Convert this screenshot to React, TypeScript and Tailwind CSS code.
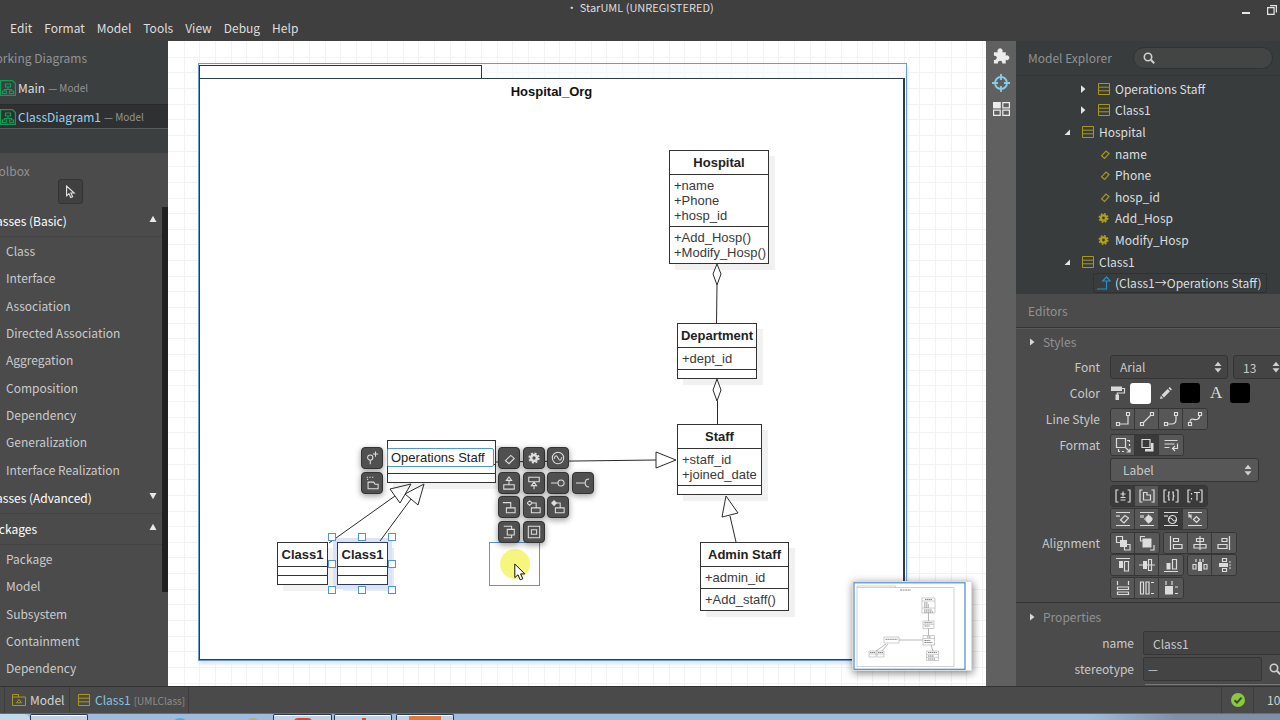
import React, { useState } from 'react';

const UI_FONT = "font-['Noto_Sans_CJK_SC','Noto_Sans',sans-serif]";
const DIAGRAM_FONT = "font-['Liberation_Sans',Arial,sans-serif]";

const MENUS = ['Edit', 'Format', 'Model', 'Tools', 'View', 'Debug', 'Help'];

const BASIC_TOOLS = [
  'Class', 'Interface', 'Association', 'Directed Association', 'Aggregation',
  'Composition', 'Dependency', 'Generalization', 'Interface Realization',
];
const PACKAGE_TOOLS = ['Package', 'Model', 'Subsystem', 'Containment', 'Dependency'];

type TreeKind = 'class' | 'attribute' | 'operation' | 'generalization';

interface TreeNode {
  name: string;
  kind: TreeKind;
  level: 0 | 1;
  state?: 'open' | 'closed';
  selected?: boolean;
}

const TREE: TreeNode[] = [
  { name: 'Operations Staff', kind: 'class', level: 1, state: 'closed' },
  { name: 'Class1', kind: 'class', level: 1, state: 'closed' },
  { name: 'Hospital', kind: 'class', level: 0, state: 'open' },
  { name: 'name', kind: 'attribute', level: 1 },
  { name: 'Phone', kind: 'attribute', level: 1 },
  { name: 'hosp_id', kind: 'attribute', level: 1 },
  { name: 'Add_Hosp', kind: 'operation', level: 1 },
  { name: 'Modify_Hosp', kind: 'operation', level: 1 },
  { name: 'Class1', kind: 'class', level: 0, state: 'open' },
  { name: '(Class1→Operations Staff)', kind: 'generalization', level: 1, selected: true },
];

/* ---------- icons ---------- */

const ClassIcon = () => (
  <svg viewBox="0 0 12 12" className="size-3 shrink-0" fill="none" stroke="#a8981c">
    <path d="M.5 .5h11v11H.5zM.5 4.2h11M.5 7.8h11" />
  </svg>
);

const DiagramIcon = () => (
  <svg viewBox="0 0 16 16" className="size-4 shrink-0" fill="none" stroke="#139a55" strokeWidth="1.2">
    <path d="M.6 .6h11.8l3 3v11.8H.6zM5.5 4h5v3h-5zM8 7v3M4.5 11V9.5h7V11M2.5 11h4v2.5h-4zM9.5 11h4v2.5h-4z" />
  </svg>
);

const TreeIcon = ({ kind }: { kind: TreeKind }) => {
  switch (kind) {
    case 'class':
      return <ClassIcon />;
    case 'attribute':
      return (
        <svg viewBox="0 0 12 12" className="size-3 shrink-0" fill="none" stroke="#a8981c" strokeWidth="1.2">
          <path d="M3.5 7.8 8 3l3 2.6-4.4 4.9z" />
        </svg>
      );
    case 'operation':
      return (
        <svg viewBox="0 0 12 12" className="size-3 shrink-0" fill="none" stroke="#b3a013">
          <circle cx="5.5" cy="6" r="2.6" strokeWidth="2.4" />
          <circle cx="5.5" cy="6" r="4.3" strokeWidth="1.4" strokeDasharray="1.8 1.58" />
        </svg>
      );
    case 'generalization':
      return (
        <svg viewBox="0 0 14 14" className="-mx-px size-[14px] shrink-0" fill="none" stroke="#2b8fc4" strokeWidth="1.2">
          <path d="M0 13h9.5V5M5.8 5h7.4L9.5 1z" />
        </svg>
      );
  }
};

const Caret = ({ state }: { state?: 'open' | 'closed' }) => (
  <svg viewBox="0 0 10 10" className="mr-[10px] size-[10px] shrink-0 fill-[#e4e4e4]">
    {state === 'closed' && <path d="M3 1.2 7.4 5 3 9z" />}
    {state === 'open' && <path d="M8 2.5V8H2.5z" />}
  </svg>
);

const SearchIcon = () => (
  <svg viewBox="0 0 12 12" className="size-3 shrink-0" fill="none" stroke="#cfcfcf" strokeWidth="1.6">
    <circle cx="5" cy="5" r="3.7" />
    <path d="m7.8 7.8 3.4 3.4" strokeWidth="2" />
  </svg>
);

const Glyph = ({ d, fill, className = 'size-4' }: { d: string; fill?: string; className?: string }) => (
  <svg viewBox="0 0 16 16" className={className} fill="none" stroke="currentColor" strokeWidth="1.2">
    {fill && <path d={fill} fill="currentColor" stroke="none" />}
    <path d={d} />
  </svg>
);

const GearGlyph = () => (
  <svg viewBox="0 0 16 16" className="size-4" fill="none" stroke="currentColor">
    <circle cx="8" cy="8" r="3" strokeWidth="2.6" />
    <circle cx="8" cy="8" r="4.8" strokeWidth="1.6" strokeDasharray="2 1.77" />
  </svg>
);

/* ---------- left side ---------- */

const DiagramRow = ({ name, active }: { name: string; active?: boolean }) => (
  <button className={`flex h-[25px] w-full items-center border-y ${active ? 'border-t-[#2a2a2a] border-b-[#585a5b] bg-[#2f3031]' : 'border-transparent'}`}>
    <DiagramIcon />
    <span className={`ml-[2px] text-[12px] ${active ? 'text-[#98d2f2]' : 'text-[#dedede]'}`}>{name}</span>
    <span className="ml-[3px] text-[10px] text-[#939495]">— Model</span>
  </button>
);

const ToolGroup = ({ title, open, tools }: { title: string; open: boolean; tools?: string[] }) => (
  <section>
    <button className="flex h-[31px] w-full items-center justify-between border-b border-[#434343] pr-[5px] text-[12px] text-white">
      <span className="-ml-[15px]">{title}</span>
      <svg viewBox="0 0 8 8" className="mb-1 size-2 fill-[#e8e8e8]">
        {open ? <path d="M.5 7 4 .8 7.5 7z" /> : <path d="M.5 1 4 7.2 7.5 1z" />}
      </svg>
    </button>
    {tools && (
      <ul>
        {tools.map((tool, i) => (
          <li key={tool} className={i % 3 === 1 ? 'h-7' : 'h-[27px]'}>
            <button className="flex size-full items-center pl-[6px] text-[12px] text-[#cacaca]">{tool}</button>
          </li>
        ))}
      </ul>
    )}
  </section>
);

const Sidebar = () => (
  <aside className="flex w-[168px] shrink-0 flex-col overflow-hidden bg-[#4b4b4b]">
    <section className="h-28 shrink-0 bg-[#3c3f40]">
      <h2 className="-ml-[15px] flex h-[34px] items-center text-[12px] text-[#929394]">Working Diagrams</h2>
      <DiagramRow name="Main" />
      <div className="h-1" />
      <DiagramRow name="ClassDiagram1" active />
    </section>
    <section className="relative min-h-0 flex-1">
      <h2 className="-ml-[15px] flex h-[26px] items-end text-[12px] leading-[17px] text-[#929292]">Toolbox</h2>
      <button aria-label="Select" className="ml-[58px] flex size-[25px] items-center justify-center rounded-[3px] border border-[#333] bg-[#404040]">
        <svg viewBox="0 0 12 16" className="h-[14px] w-[11px]" fill="none" stroke="#e0e0e0" strokeWidth="1.3">
          <path d="M1.5 1.2v11l2.8-2.4 1.9 4.6 2.2-.9-1.9-4.4h3.7z" />
        </svg>
      </button>
      <div className="mt-[2px] mr-[6px]">
        <ToolGroup title="Classes (Basic)" open tools={BASIC_TOOLS} />
        <ToolGroup title="Classes (Advanced)" open={false} />
        <ToolGroup title="Packages" open tools={PACKAGE_TOOLS} />
      </div>
      <div className="absolute top-[54px] right-0 h-[385px] w-[6px] bg-[#202020]" />
    </section>
  </aside>
);

/* ---------- canvas ---------- */

interface ClassBoxProps {
  name: string;
  place: string;
  attributes?: string[];
  operations?: string[];
  glow?: boolean;
}

const Compartment = ({ lines }: { lines: string[] }) => (
  <ul className={`border-t border-[#333] pl-[4px] ${lines.length ? 'py-[3px]' : 'h-[9px]'}`}>
    {lines.map(line => <li key={line} className="h-[15px] leading-[15px] text-[#3a3a3a]">{line}</li>)}
  </ul>
);

const ClassBox = ({ name, place, attributes = [], operations = [], glow }: ClassBoxProps) => (
  <div className={`absolute border bg-white whitespace-nowrap ${place} ${glow ? 'border-[#2b3a5c] shadow-[0_0_0_4px_#dbe4f6,6px_6px_0_#e3eaf8]' : 'border-[#333] shadow-[6px_6px_0_#f1f1f1]'}`}>
    <div className="h-[23px] text-center leading-[23px] font-bold text-[#222]">{name}</div>
    <Compartment lines={attributes} />
    <Compartment lines={operations} />
  </div>
);

const GRID_STEP = 15.65;
const gridLines = () => {
  let d = '';
  for (let i = 1; i < 130; i++) d += `M${Math.round(i * GRID_STEP)} 0V1400`;
  for (let i = 1; i < 90; i++) d += `M0 ${Math.round(i * GRID_STEP)}H2000`;
  return d;
};

const HANDLES = [
  'left-[160px] top-[492px]', 'left-[190px] top-[492px]', 'left-[220px] top-[492px]',
  'left-[160px] top-[519px]', 'left-[220px] top-[519px]',
  'left-[160px] top-[545px]', 'left-[190px] top-[545px]', 'left-[220px] top-[545px]',
];

const QuickButton = ({ label, place, children }: { label: string; place?: string; children: React.ReactNode }) => (
  <button aria-label={label} className={`flex size-[22px] items-center justify-center rounded-[4px] border border-[#333] bg-[#505050] text-[#dedede] shadow-[0_2px_6px_rgba(0,0,0,0.4)] ${place ?? ''}`}>
    {children}
  </button>
);

const Minimap = () => (
  <div className="absolute right-[14px] bottom-[15px] h-[90px] w-[120px] border border-[#ddd] bg-white shadow-[1px_2px_8px_rgba(0,0,0,0.5)]">
    <svg viewBox="0 0 118 88" className="size-full" fill="none" stroke="#b8b8b8" strokeWidth=".7">
      <rect x="1" y=".8" width="111" height="86.5" stroke="#4a8cc9" strokeWidth="1.2" />
      <path d="M4 5.5V4h38.5v1.5M4 5.5h97v79H4z" stroke="#bdbdbd" />
      <path d="M47 8h11" stroke="#555" strokeDasharray="2 .6" />
      <path d="M69 16h13v15H69zM69 19h13M69 26h13M70 39h11v7.5H70zM70 42.3h11M70 53.5h11.5V63H70zM70 56.5h11.5M73.5 69h12v9.5h-12zM73.5 72.3h12M73.5 75.3h12M31 55h15v6H31zM16 69h7v6h-7zM24 69h7v6h-7zM16 72h15" />
      <path d="M75.5 31v8M75.5 46.5v7M46 58h24M80 69l-2-6M23 69l10-7M29 69l6-7" stroke="#999" />
      <path d="M72 17.5h7M71 21h4M71 23h5M71 25h5M71 28h8M71 30h9M71.5 40.7h8M71.5 44h5M74 55h4M71.5 58.5h6M71.5 60.5h8M75 70.5h9M75 74h6M75 77h7M32.5 57.3h12M17 70.5h5M25 70.5h5" stroke="#555" strokeDasharray="1.5 .4" />
    </svg>
  </div>
);

const Canvas = () => {
  const [name, setName] = useState('Operations Staff');

  return (
    <main className={`relative min-w-0 flex-1 overflow-hidden bg-white text-[13px] ${DIAGRAM_FONT}`}>
      <svg className="absolute size-full" stroke="#f2f2f2" shapeRendering="crispEdges">
        <path d={gridLines()} />
      </svg>

      {/* package */}
      <div className="absolute top-[22px] left-[30px] h-[598px] w-[709px] border border-[#6c9bd2] bg-[#f8fafe]/60 shadow-[1px_3px_3px_#dbe6f6]" />
      <div className="absolute top-[24px] left-[31px] h-[14px] w-[283px] border border-[#26324a] bg-white" />
      <div className="absolute top-[37px] left-[31px] h-[582px] w-[706px] border border-r-2 border-[#2c3a56] bg-white pt-[4px] text-center leading-[18px] font-bold text-[#111]">
        Hospital_Org
      </div>

      <ClassBox name="Hospital" place="left-[501px] top-[109px] w-[100px]" attributes={['+name', '+Phone', '+hosp_id']} operations={['+Add_Hosp()', '+Modify_Hosp()']} />
      <ClassBox name="Department" place="left-[509px] top-[282px] w-[80px]" attributes={['+dept_id']} />
      <ClassBox name="Staff" place="left-[509px] top-[383px] w-[85px]" attributes={['+staff_id', '+joined_date']} />
      <ClassBox name="Admin Staff" place="left-[532px] top-[501px] w-[89px]" attributes={['+admin_id']} operations={['+Add_staff()']} />
      <ClassBox name="Class1" place="left-[109px] top-[501px] w-[51px]" />
      <ClassBox name="" place="left-[219px] top-[399px] w-[109px]" />
      <ClassBox name="Class1" place="left-[169px] top-[501px] w-[51px]" glow />

      {/* relationships */}
      <svg className="absolute size-full" fill="none" stroke="#2a2a2a">
        <path d="M548.5 282l.5-38M549.5 383v-23M327 421l161-2M568 501l-6-26M161 502l66-47M212 500l31-42" />
        <path d="m549 223 4 10-4 11-4-11zM549 338l4 11-4 11-4-11zM508 419l-20-8v16zM558 455l-4 21 16-4z" fill="white" />
        <path d="m243 443-21 5 10 14zM256 443l-19 10 13 11z" />
      </svg>

      {HANDLES.map(place => <div key={place} className={`absolute size-2 border border-[#4d94d0] bg-white ${place}`} />)}

      <div className="absolute top-[501px] left-[321px] flex h-[44px] w-[51px] items-center justify-center border border-[#5b96cf] bg-white">
        <div className="size-[30px] rounded-full bg-[#f6f67e]" />
      </div>

      <input
        aria-label="Element name"
        value={name}
        onChange={e => setName(e.target.value)}
        className="absolute top-[407px] left-[219px] h-[19px] w-[107px] rounded-[2px] border border-[#4f97d8] bg-white px-[3px] text-[#222] outline-none"
      />

      {/* quick edit buttons */}
      <div className="absolute top-[406px] left-[193px] flex flex-col gap-[3px]">
        <QuickButton label="Add note"><Glyph d="M6 15v-5M9 7.5a3 3 0 1 1-6 0 3 3 0 0 1 6 0zM9 3.5h6M12 .5v6" className="size-[14px]" /></QuickButton>
        <QuickButton label="Add constraint"><Glyph d="M2 1.5h1.5M5 1.5h1.5M8 1.5h1.5M3 3v1.5M3.5 14.5V7H10l1.5 2.5H15v5z" className="size-[14px]" /></QuickButton>
      </div>
      <div className="absolute top-[406px] left-[330px] grid h-[96px] w-[96px] grid-cols-[22px_22px_22px_22px] content-between justify-between">
        <QuickButton label="Add attribute"><Glyph d="m4 11 6-6 4 3.5-6 6z" className="size-[14px]" /></QuickButton>
        <QuickButton label="Add operation"><GearGlyph /></QuickButton>
        <QuickButton label="Add reception"><Glyph d="M14.5 8a6.5 6.5 0 1 1-13 0 6.5 6.5 0 0 1 13 0zM3.5 9C5 4 6.5 5 8 8s3 4 4.5-1" className="size-[14px]" /></QuickButton>
        <QuickButton label="Add sub-class" place="col-start-1"><Glyph d="M2 10h12v5H2zM8 10V5M5 5l3-4 3 4z" className="size-[14px]" /></QuickButton>
        <QuickButton label="Add super-class"><Glyph d="M2 1.5h12v5H2zM8 15v-4M5 11l3-4 3 4z" className="size-[14px]" /></QuickButton>
        <QuickButton label="Add provided interface"><Glyph d="M0 8h8M15 8a3.5 3.5 0 1 1-7 0 3.5 3.5 0 0 1 7 0z" className="size-[14px]" /></QuickButton>
        <QuickButton label="Add required interface"><Glyph d="M0 8h10M15 3.5c-6 0-6 9 0 9" className="size-[14px]" /></QuickButton>
        <QuickButton label="Add associated class"><Glyph d="M1 3h9v6M5 9h10v5.5H5z" className="size-[14px]" /></QuickButton>
        <QuickButton label="Add aggregated class"><Glyph d="M0 3.5 3 1l3 2.5L3 6zM6 3.5h4.5V9M5 9h10v5.5H5z" className="size-[14px]" /></QuickButton>
        <QuickButton label="Add composed class"><Glyph d="M6 3.5h4.5V9M5 9h10v5.5H5z" fill="M0 3.5 3.5 0 7 3.5 3.5 7z" className="size-[14px]" /></QuickButton>
        <QuickButton label="Add port" place="col-start-1"><Glyph d="M2 1.5h9V5M6 5h8v6.5H6zM11 11.5v3H2" className="size-[14px]" /></QuickButton>
        <QuickButton label="Add part"><Glyph d="M1.5 1.5h13v13h-13zM5 5.5h6v5H5z" className="size-[14px]" /></QuickButton>
      </div>

      {/* mouse pointer */}
      <svg viewBox="0 0 12 18" className="absolute top-[522px] left-[346px] h-[18px] w-3" fill="white" stroke="#111">
        <path d="M.8 1v13.6l3.2-2.8 2.2 5 2.6-1.1-2.2-4.8h4.2z" />
      </svg>

      <Minimap />
    </main>
  );
};

/* ---------- right side ---------- */

const ModuleBar = () => (
  <nav className="flex w-[30px] shrink-0 flex-col items-center gap-[10px] bg-[#606060] pt-[6px] text-[#ececec]">
    <button aria-label="Extensions">
      <svg viewBox="0 0 18 18" className="size-[17px]" fill="currentColor">
        <path d="M1 5.5h4.2a2.7 2.7 0 1 1 4.6 0h3.7v3.7a2.5 2.5 0 1 1 0 4.3v4H9.7a2.3 2.3 0 1 0-4.4 0H1v-3.8a2.3 2.3 0 1 0 0-4.4z" />
      </svg>
    </button>
    <button aria-label="Navigator" className="text-[#86cdea]">
      <svg viewBox="0 0 18 18" className="size-[18px]" fill="none" stroke="currentColor" strokeWidth="1.8">
        <circle cx="9" cy="9" r="6" />
        <path d="M9 0v6M9 12v6M0 9h6M12 9h6" />
      </svg>
    </button>
    <button aria-label="Layout">
      <svg viewBox="0 0 17 14" className="h-[14px] w-[17px]" fill="none" stroke="currentColor" strokeWidth="1.2">
        <path d="M0 0h7.8v6.4H0z" fill="currentColor" stroke="none" />
        <path d="M9.8 .6h6.6v5.3H9.8zM.6 8.1h6.6v5.3H.6zM9.8 8.1h6.6v5.3H9.8z" />
      </svg>
    </button>
  </nav>
);

const Spinner = ({ className = 'right-[6px]' }: { className?: string }) => (
  <svg viewBox="0 0 8 12" className={`pointer-events-none absolute top-1/2 h-3 w-2 -translate-y-1/2 fill-[#cfcfcf] ${className}`}>
    <path d="M.5 5 4 .8 7.5 5zM.5 7.2 4 11.4 7.5 7.2z" />
  </svg>
);

const ButtonGroup = ({ items }: { items: { label: string; d: string; fill?: string; on?: boolean }[] }) => (
  <div className="flex h-[22px] shrink-0 divide-x divide-[#383838] overflow-hidden rounded-[3px] border border-[#363636] text-[#dcdcdc]">
    {items.map(item => (
      <button key={item.label} aria-label={item.label} className={`flex w-6 items-center justify-center ${item.on ? 'bg-[#3a3a3a]' : 'bg-[#575757]'}`}>
        <Glyph d={item.d} fill={item.fill} />
      </button>
    ))}
  </div>
);

const FieldRow = ({ label, children, className = 'h-[26px]' }: { label: string; children: React.ReactNode; className?: string }) => (
  <div className={`flex items-center text-[#d8d8d8] ${className}`}>
    <span className="mr-[10px] w-[84px] shrink-0 text-right text-[#c9c9c9]">{label}</span>
    {children}
  </div>
);

const ENDS = 'M1.5 11.5h3v3h-3zM11.5 1.5h3v3h-3z';
const LINE_STYLES = [
  { label: 'Rectilinear', d: `${ENDS}M4.5 13H13V4.5` },
  { label: 'Oblique', d: `${ENDS}M4.5 11.5l7-7` },
  { label: 'Rounded rectilinear', d: `${ENDS}M4.5 13h4q4.5 0 4.5-4.5v-4` },
  { label: 'Curve', d: `${ENDS}M3 11.5C3 3.5 11 13.5 13 4.5` },
];
const FORMATS = [
  { label: 'Auto resize', d: 'M1.5 1.5h9v9h-9zM12 3.5h2.5V5M14.5 7v2M3.5 12v2.5H5M7 14.5h2M10 10l5 5M15 11.5V15h-3.5' },
  { label: 'Show shadow', d: 'M3 2.5h8v8H3z', fill: 'M12 6h2.5v8.5H6V12h6z', on: true },
  { label: 'Word wrap', d: 'M1.5 3.5h13M1.5 7h10M1.5 10.5h5M14.5 6.5v5H10M12 9l-2.5 2.5L12 14' },
];
const BRACKETS = 'M3.5 2H1v12h2.5M12.5 2H15v12h-2.5';
const SHOW_OPTIONS = [
  { label: 'Show visibility', d: `${BRACKETS}M8 3.5v5M5.5 6h5M5.5 9.5h5M5.5 12h5`, on: true },
  { label: 'Show namespace', d: `${BRACKETS}M4.5 12V4.5H8V7h3.5v5z` },
  { label: 'Show property', d: `${BRACKETS}M7 4H5.8v3L5 8l.8 1v3H7M9 4h1.2v3l.8 1-.8 1v3H9`, on: true },
  { label: 'Show type', d: `${BRACKETS}M7 4.5h6M10 4.5v8M4.5 5v1.5M4.5 10v1.5`, on: true },
];
const RULES = 'M1 1.5h14M1 14.5h14';
const SUPPRESS = [
  { label: 'Suppress attributes', d: `${RULES}M5.5 9 10 4.5 13.5 7 9 12zM2 4v2M4 4v2` },
  { label: 'Suppress operations', d: `${RULES}M2 4v3M4 4v3M9.5 3.5v9M5 8h9`, fill: 'M6.500 6.500l2-2H11l2 2v3l-2 2.200H8.500l-2-2.200z' },
  { label: 'Suppress receptions', d: `${RULES}M2 4v2M4 4v2M5.500 8.500a4 4 0 1 0 8 0 4 4 0 0 0-8 0q2-3 4 0t4 0`, on: true },
  { label: 'Suppress literals', d: `${RULES}M6.500 8.500l3-3 3 3-3 3zM2 6.500v-3l2 3v-3` },
];
const ALIGN = [
  [
    { label: 'Bring to front', d: 'M1.5 1.5h6v6h-6zM9.5 9.5H15V15H9.5z', fill: 'M5 5h7v7H5z' },
    { label: 'Send to back', d: 'M5 6H1.5V1.5H6M11 15h4v-5', fill: 'M3.5 3.5h9v9h-9z' },
  ],
  [
    { label: 'Align left', d: 'M2.5 1v14M5.5 3.5h5v3h-5zM5.5 9.5H14v4H5.5z' },
    { label: 'Align center', d: 'M8 1v14M4.5 3.5h7v3h-7zM2 9.5h12V13H2z' },
    { label: 'Align right', d: 'M13.5 1v14M6 3.5h5v3H6zM2 9.5h9v4H2z' },
  ],
  [
    { label: 'Align top', d: 'M1 1.5h14M9.5 4.5h4V14h-4z', fill: 'M4 4h4v7H4z' },
    { label: 'Align middle', d: 'M0 8h16M9.5 2.5h3v11h-3z', fill: 'M4 4h4v8H4z' },
    { label: 'Align bottom', d: 'M1 14.5h14M9.5 2.5h4V12h-4z', fill: 'M3.5 6h4v6.5h-4z' },
  ],
  [
    { label: 'Space horizontally', d: 'M1 7.5h3V12H1zM12 7.5h3V12h-3zM4 2v3M8 2v3M11 2v3', fill: 'M6 5h4v9H6z' },
    { label: 'Space vertically', d: 'M6.5 1.5h4v3h-4zM6.5 11.5h4v3h-4zM13 5h2M13 8h2M13 11h2', fill: 'M3 6h9v4H3z' },
  ],
  [
    { label: 'Set width', d: 'M2.5 1v4M13.5 1v4M2.5 7h11v2.5h-11zM2.5 12h11v2.5h-11z' },
    { label: 'Set height', d: 'M1.5 2h3v12h-3zM7 2h3v12H7zM12 2.5h3M12 13.5h3' },
    { label: 'Set size', d: 'M3 1v4M9 1v4M12 7h3M12 13.5h3', fill: 'M2 6h8v8.5H2z' },
  ],
];

const SELECT = 'h-6 w-full appearance-none rounded-[3px] border border-[#343434] pl-[9px] text-[#c9c9c9] outline-none';

const SectionTitle = ({ children, className = '' }: { children: string; className?: string }) => (
  <button className={`flex w-full items-center pl-[13px] text-[12px] text-[#929292] ${className}`}>
    <svg viewBox="0 0 6 8" className="mr-[8px] h-2 w-[6px] fill-[#d8d8d8]"><path d="M1 .5 5.5 4 1 7.5z" /></svg>
    {children}
  </button>
);

const Inspector = () => {
  const [className, setClassName] = useState('Class1');

  return (
    <aside className="flex w-[264px] shrink-0 flex-col overflow-hidden bg-[#4b4b4b] text-[12px]">
      <section className="h-[253px] shrink-0 bg-[#383c3d]">
        <header className="flex h-[35px] items-center border-b border-[#333738] pl-3 text-[#8e9192]">
          <h2 className="w-[105px]">Model Explorer</h2>
          <label className="flex h-[22px] w-[140px] items-center rounded-full border border-[#303334] bg-[#434545] pl-[9px]">
            <SearchIcon />
            <input aria-label="Search model" className="min-w-0 flex-1 bg-transparent outline-none" />
          </label>
        </header>
        <ul className="flex h-[218px] flex-col pt-[2px]">
          {TREE.map((node, i) => (
            <li key={i} className={`flex min-h-0 flex-1 items-center ${node.level ? 'pl-[62px]' : 'pl-[46px]'}`}>
              <Caret state={node.state} />
              <span className={`flex items-center gap-[5px] pr-[4px] text-[#dcdedf] ${node.selected ? '-ml-[5px] h-5 rounded-[2px] border border-[#2f3233] pl-[4px]' : ''}`}>
                <TreeIcon kind={node.kind} />
                <span className="whitespace-nowrap">{node.name}</span>
              </span>
            </li>
          ))}
        </ul>
      </section>

      <h2 className="flex h-[34px] shrink-0 items-center border-b border-[#343434] pl-3 text-[#929292]">Editors</h2>

      <section className="shrink-0 border-t border-[#5a5a5a] pb-[3px]">
        <SectionTitle className="h-[25px]">Styles</SectionTitle>
        <FieldRow label="Font">
          <div className="relative w-[118px] shrink-0">
            <select aria-label="Font" className={`${SELECT} bg-[#444]`}><option>Arial</option></select>
            <Spinner />
          </div>
          <div className="relative ml-[5px] w-[56px] shrink-0">
            <input aria-label="Font size" defaultValue="13" className={`${SELECT} bg-[#444]`} />
            <Spinner className="right-[9px]" />
          </div>
        </FieldRow>
        <FieldRow label="Color">
          <Glyph d="M12 3.5h2.5V8H7.3v2" fill="M1 1.5h11V6H1zM5.5 9.5H9V15H5.5z" />
          <button aria-label="Fill color" className="ml-[4px] size-[21px] rounded-[3px] bg-white" />
          <svg viewBox="0 0 14 14" className="ml-2 size-[13px] fill-[#d8d8d8]"><path d="M1 13l1-3.5L4.5 12zM2.8 8.7l6.5-6.5 2.5 2.5-6.500 6.500zM10.200 1.300 11.500 0 14 2.500l-1.300 1.300z" /></svg>
          <button aria-label="Line color" className="ml-2 size-5 rounded-[3px] bg-black" />
          <span aria-hidden="true" className="ml-[10px] w-3 text-center font-['Liberation_Serif',serif] text-[17px] text-[#dcdcdc]">A</span>
          <button aria-label="Font color" className="ml-2 size-5 rounded-[3px] bg-black" />
        </FieldRow>
        <FieldRow label="Line Style"><ButtonGroup items={LINE_STYLES} /></FieldRow>
        <FieldRow label="Format"><ButtonGroup items={FORMATS} /></FieldRow>
        <div className="flex flex-col items-start pl-[94px]">
          <div className="relative w-[149px]">
            <select aria-label="Stereotype display" className={`${SELECT} bg-[#575757] pl-[12px]`}><option>Label</option></select>
            <Spinner className="right-[7px]" />
          </div>
          <div className="mt-[3px] mb-px"><ButtonGroup items={SHOW_OPTIONS} /></div>
          <ButtonGroup items={SUPPRESS} />
        </div>
        <FieldRow label="Alignment" className="mt-px h-[23px]">
          <div className="flex gap-[3px]"><ButtonGroup items={ALIGN[0]} /><ButtonGroup items={ALIGN[1]} /></div>
        </FieldRow>
        <div className="flex flex-col gap-px pl-[94px]">
          <div className="flex gap-[3px]"><ButtonGroup items={ALIGN[2]} /><ButtonGroup items={ALIGN[3]} /></div>
          <div className="flex"><ButtonGroup items={ALIGN[4]} /></div>
        </div>
      </section>

      <section className="border-t border-[#343434]">
        <SectionTitle className="h-[28px]">Properties</SectionTitle>
        <label className="-mt-px flex h-[26px] items-center text-[#c9c9c9]">
          <span className="mr-[9px] w-[118px] shrink-0 text-right">name</span>
          <input value={className} onChange={e => setClassName(e.target.value)} className="h-6 w-[150px] shrink-0 rounded-[2px] border border-[#363636] bg-[#444] pl-[9px] outline-none" />
        </label>
        <label className="flex h-[26px] items-center text-[#c9c9c9]">
          <span className="mr-[9px] w-[118px] shrink-0 text-right">stereotype</span>
          <input defaultValue="—" className="mr-[7px] h-6 w-[119px] shrink-0 rounded-[2px] border border-[#363636] bg-[#444] pl-[4px] text-[11px] outline-none" />
          <SearchIcon />
        </label>
        <div className="mt-[2px] ml-[129px] h-6 w-[150px] border-t border-[#777]" />
      </section>
    </aside>
  );
};

/* ---------- bottom bars ---------- */

const StatusBar = () => (
  <footer className="flex h-[27px] shrink-0 items-stretch overflow-hidden border-t border-[#333] bg-[#4a4a4a] text-[12px]">
    <div className="w-[5px] border-r border-[#3c3c3c]" />
    <button className="flex w-[65px] items-center gap-1 border-r border-[#3c3c3c] pl-[7px] text-[#d4d4d4]">
      <svg viewBox="0 0 14 12" className="h-3 w-[14px] shrink-0" fill="none" stroke="#a8981c">
        <path d="M.5 3V.5h6V3M.5 3h13v8.5H.5zM4.5 8.8h5L7 5.5z" />
      </svg>
      Model
    </button>
    <button className="flex w-[119px] items-center border-r border-[#3c3c3c] pl-2 text-[#85c5e0]">
      <ClassIcon />
      <span className="ml-[5px]">Class1</span>
      <span className="ml-[3px] text-[10px] text-[#8c8c8c]">[UMLClass]</span>
    </button>
    <div className="flex-1" />
    <div className="flex w-[33px] items-center justify-center border-x border-[#3c3c3c]">
      <svg viewBox="0 0 14 14" className="size-[14px]" fill="none">
        <circle cx="7" cy="7" r="7" fill="#8bc83f" />
        <path d="M3.5 7.2 6 9.6l4.5-5" stroke="#3c4a2c" strokeWidth="2" />
      </svg>
    </div>
    <div className="flex w-[26px] items-center pl-[13px] whitespace-nowrap text-[#d0d0d0]">10</div>
  </footer>
);

const TaskButton = ({ className }: { className: string }) => (
  <div className={`h-full rounded-t-[2px] border border-b-0 border-[#2b3a50] bg-[#c3d2e3] shadow-[inset_0_1px_0_white] ${className}`} />
);

const Taskbar = () => (
  <div className="flex h-[7px] shrink-0 overflow-hidden border-t border-[#5d6f85] bg-linear-to-r from-[#9fbbdb] from-85% to-[#7e90a8] to-92%">
    <div className="w-[30px] rounded-tr-full bg-[#c1dbea]" />
    <TaskButton className="w-[58px]" />
    <div className="flex w-[185px]">
      <div className="mt-1 ml-[84px] h-2 w-4 rounded-t-full bg-[#3fb0e6]" />
      <div className="mt-1 ml-[57px] h-2 w-4 rounded-t-full bg-[#b6b070]" />
    </div>
    <TaskButton className="w-[59px]" />
    <div className="mt-1 -ml-[38px] h-1 w-[18px] rounded-t-full bg-[#cf4a42]" />
    <TaskButton className="ml-[22px] w-[58px]" />
    <div className="mt-1 -ml-[30px] h-1 w-1 bg-[#c9562a]" />
    <TaskButton className="ml-[30px] w-[58px]" />
    <div className="mt-[2px] -ml-[45px] h-2 w-8 bg-[#dd7b3a]" />
  </div>
);

const App: React.FC = () => (
  <div className={`flex h-screen flex-col overflow-hidden bg-[#3f3f3f] ${UI_FONT}`}>
    <header className="relative h-[41px] shrink-0 text-[#dedede]">
      <h1 className="h-[15px] text-center text-[11px] leading-[15px]">• StarUML (UNREGISTERED)</h1>
      <nav className="flex h-[26px] items-center gap-3 pl-[10px]">
        {MENUS.map(menu => <button key={menu} className="text-[12px] leading-none">{menu}</button>)}
      </nav>
      <div className="absolute top-[5px] right-0 flex items-start gap-[17px]">
        <button aria-label="Minimize" className="mt-[7px] h-[2px] w-2 bg-[#e5e5e5]" />
        <button aria-label="Restore" className="mr-[3px]">
          <svg viewBox="0 0 10 10" className="size-[10px]" fill="none" stroke="#e5e5e5" strokeWidth="1.2">
            <path d="M.6 2.6h6.5v6.8H.6zM3 .6h6.4v6.9" />
          </svg>
        </button>
      </div>
    </header>
    <div className="flex min-h-0 flex-1">
      <Sidebar />
      <Canvas />
      <ModuleBar />
      <Inspector />
    </div>
    <StatusBar />
    <Taskbar />
  </div>
);

export default App;
